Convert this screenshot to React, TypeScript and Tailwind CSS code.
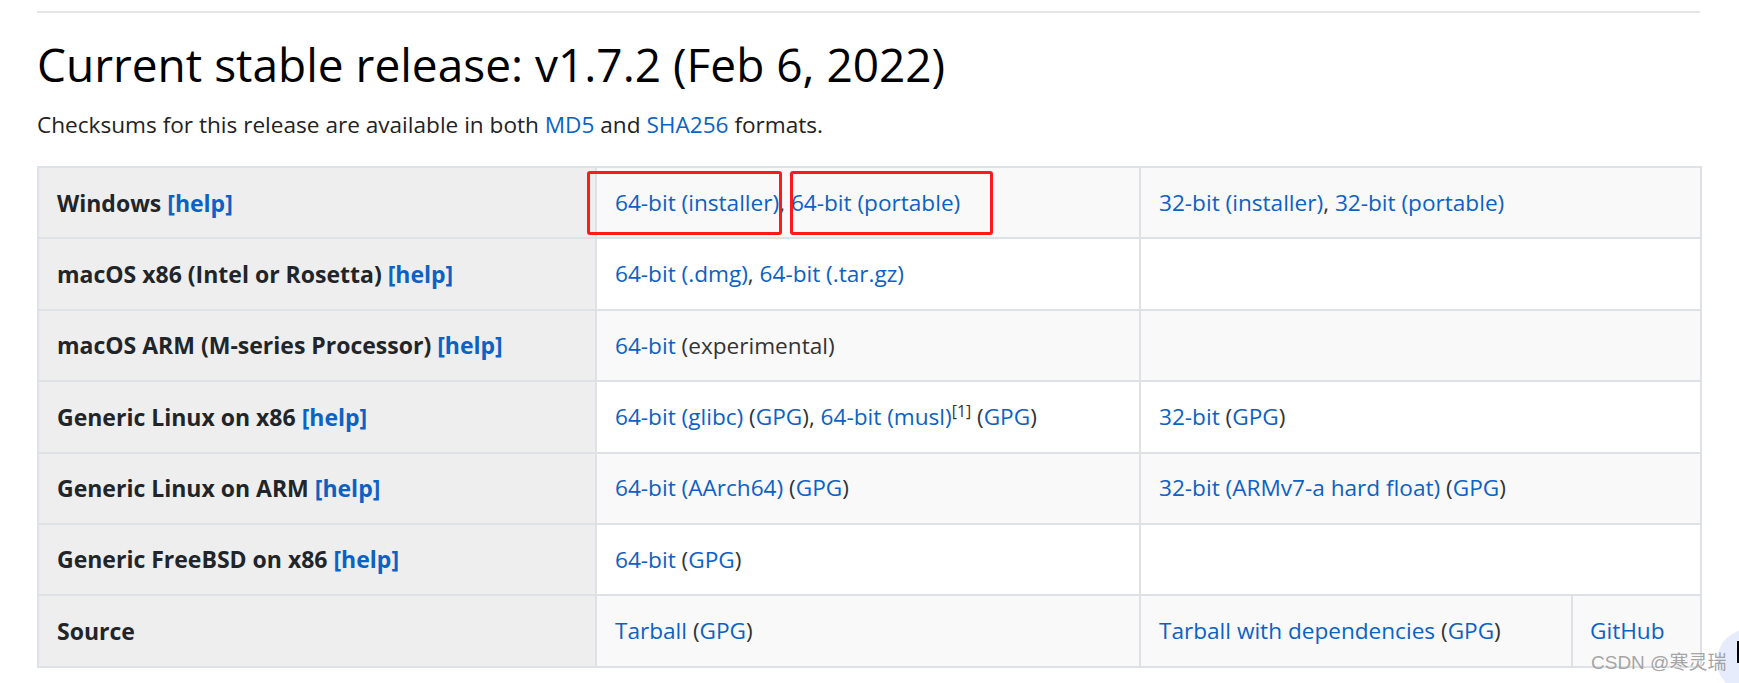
import React from 'react';
import type { ReactNode } from 'react';

interface Row {
  platform: string;
  main: ReactNode;
  extra?: ReactNode;
  github?: boolean;
}

const L: React.FC<{ children: ReactNode }> = ({ children }) => (
  <a href="#" className="text-[#0b62c4]">
    {children}
  </a>
);

const rows: Row[] = [
  {
    platform: 'Windows',
    main: (
      <>
        <L>64-bit (installer)</L>, <L>64-bit (portable)</L>
      </>
    ),
    extra: (
      <>
        <L>32-bit (installer)</L>, <L>32-bit (portable)</L>
      </>
    ),
  },
  {
    platform: 'macOS x86 (Intel or Rosetta)',
    main: (
      <>
        <L>64-bit (.dmg)</L>, <L>64-bit (.tar.gz)</L>
      </>
    ),
  },
  {
    platform: 'macOS ARM (M-series Processor)',
    main: (
      <>
        <L>64-bit</L> (experimental)
      </>
    ),
  },
  {
    platform: 'Generic Linux on x86',
    main: (
      <>
        <L>64-bit (glibc)</L> (<L>GPG</L>), <L>64-bit (musl)</L>
        <sup className="text-[0.7em]">[1]</sup> (<L>GPG</L>)
      </>
    ),
    extra: (
      <>
        <L>32-bit</L> (<L>GPG</L>)
      </>
    ),
  },
  {
    platform: 'Generic Linux on ARM',
    main: (
      <>
        <L>64-bit (AArch64)</L> (<L>GPG</L>)
      </>
    ),
    extra: (
      <>
        <L>32-bit (ARMv7-a hard float)</L> (<L>GPG</L>)
      </>
    ),
  },
  {
    platform: 'Generic FreeBSD on x86',
    main: (
      <>
        <L>64-bit</L> (<L>GPG</L>)
      </>
    ),
  },
  {
    platform: 'Source',
    main: (
      <>
        <L>Tarball</L> (<L>GPG</L>)
      </>
    ),
    extra: (
      <>
        <L>Tarball with dependencies</L> (<L>GPG</L>)
      </>
    ),
    github: true,
  },
];

export default function App() {
  return (
    <div
      className="relative w-[1739px] h-[683px] overflow-hidden bg-white text-[#212529]"
      style={{ fontFamily: '"Open Sans", "Noto Sans", sans-serif' }}
    >
      <div className="pl-[37px] pt-[11px] w-[1700px]">
        <div className="border-t-2 border-[#e6e6e6]" />

        <h1 className="mt-[24px] text-[46px] leading-[1.2] font-normal text-black">
          Current stable release: v1.7.2 (Feb 6, 2022)
        </h1>

        <p className="mt-[16px] text-[22.6px] leading-[1.5] text-[#222]">
          Checksums for this release are available in both <L>MD5</L> and <L>SHA256</L> formats.
        </p>

        <table className="mt-[24px] w-[1663px] table-fixed border-collapse text-[22.6px] leading-[1.5]">
          <colgroup>
            <col className="w-[558px]" />
            <col className="w-[544px]" />
            <col className="w-[432px]" />
            <col className="w-[129px]" />
          </colgroup>
          <tbody>
            {rows.map((row, idx) => {
              const cellBg = idx % 2 === 0 ? 'bg-[#f9f9f9]' : 'bg-white';
              return (
                <tr key={row.platform} className="h-[71.4px]">
                  <td className="border-2 border-[#dee2e6] bg-[#eeeeee] px-[18px] text-[23px] font-bold whitespace-nowrap">
                    {row.platform}
                    {row.platform !== 'Source' && (
                      <>
                        {' '}
                        <L>[help]</L>
                      </>
                    )}
                  </td>
                  <td className={`border-2 border-[#dee2e6] ${cellBg} px-[18px] text-[#333] whitespace-nowrap`}>
                    {row.main}
                  </td>
                  {row.github ? (
                    <>
                      <td className={`border-2 border-[#dee2e6] ${cellBg} px-[18px] text-[#333] whitespace-nowrap`}>
                        {row.extra}
                      </td>
                      <td className={`border-2 border-[#dee2e6] ${cellBg} px-[17px] whitespace-nowrap`}>
                        <L>GitHub</L>
                      </td>
                    </>
                  ) : (
                    <td
                      colSpan={2}
                      className={`border-2 border-[#dee2e6] ${cellBg} px-[18px] text-[#333] whitespace-nowrap`}
                    >
                      {row.extra}
                    </td>
                  )}
                </tr>
              );
            })}
          </tbody>
        </table>
      </div>

      {/* red annotation boxes */}
      <div className="absolute left-[587px] top-[171px] w-[195px] h-[64px] border-[3px] border-[#ff1a1a] rounded-[3px]" />
      <div className="absolute left-[790px] top-[171px] w-[203px] h-[64px] border-[3px] border-[#ff1a1a] rounded-[3px]" />

      {/* floating button at edge */}
      <div className="absolute left-[1717px] top-[629px] w-[64px] h-[64px] rounded-full bg-[#e6ecfb]">
        <div className="absolute left-[20px] top-[12px] w-[4px] h-[22px] bg-black" />
      </div>

      {/* watermark */}
      <div
        className="absolute left-[1591px] top-[653px] text-[19px] leading-none text-[#9a9a9a]/90"
        style={{ fontFamily: '"Liberation Sans", "Noto Sans CJK SC", sans-serif' }}
      >
        CSDN @寒灵瑞
      </div>
    </div>
  );
}
